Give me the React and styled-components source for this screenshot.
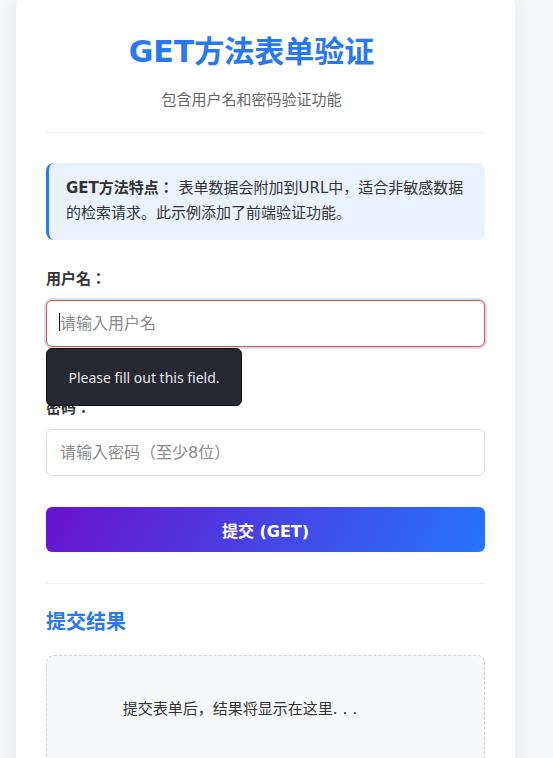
import React from 'react'
import styled, { createGlobalStyle } from 'styled-components'

const GlobalStyle = createGlobalStyle`
  html, body {
    margin: 0;
    padding: 0;
    background: #f5f6fa;
    font-family: "DejaVu Sans", "Noto Sans CJK JP", sans-serif;
    text-spacing-trim: space-all;
    overflow: hidden;
  }

  input {
    text-spacing-trim: space-all;
  }
`;

const SPage = styled.div`
  padding: 0 38px 0 16px;
`;

const SCard = styled.div`
  background: #fff;
  border-radius: 12px;
  margin-top: -6px;
  padding: 38px 30px 40px;
  box-shadow: 0 4px 20px rgba(0, 0, 0, 0.06);
`;

const SHeader = styled.header`
  text-align: center;
  padding: 0 28px 21px 0;
  border-bottom: 1px solid #eceef2;
`;

const STitle = styled.h1`
  margin: 0;
  font-size: 30px;
  font-weight: bold;
  color: #2878f0;
  line-height: 40px;
`;

const SSubtitle = styled.p`
  margin: 17px 0 0;
  font-size: 15px;
  color: #666;
  line-height: 22px;
`;

const SInfo = styled.div`
  margin-top: 30px;
  background: #e8f3ff;
  border-left: 3px solid #2878f0;
  border-radius: 8px;
  padding: 13px 14px 14px 17px;
  font-size: 15px;
  line-height: 25px;
  color: #333;

  strong {
    font-weight: bold;
  }
`;

const SForm = styled.form`
  display: flex;
  flex-direction: column;
`;

const SField = styled.div`
  position: relative;
  margin-top: ${p => p.$top || 0}px;
`;

const SLabel = styled.label`
  display: block;
  font-size: 15px;
  font-weight: bold;
  color: #333;
  line-height: 22px;
  margin-bottom: 10px;
`;

const SInput = styled.input`
  box-sizing: border-box;
  width: 100%;
  height: 47px;
  padding: 0 13px;
  font-family: "DejaVu Sans", "Noto Sans CJK JP", sans-serif;
  font-size: 16px;
  color: #333;
  background: #fff;
  border-radius: 6px;
  outline: none;
  border: 1px solid ${p => (p.$invalid ? '#e74c3c' : '#dcdcdc')};
  box-shadow: ${p => (p.$invalid ? '0 0 0 2px rgba(40, 120, 240, 0.22)' : 'none')};

  &::placeholder {
    color: #8a8a8a;
  }
`;

const SCaret = styled.span`
  position: absolute;
  left: 13px;
  top: 45px;
  width: 1px;
  height: 18px;
  background: #111;
  pointer-events: none;
`;

const STooltip = styled.div`
  position: absolute;
  left: 0;
  top: 80px;
  z-index: 5;
  box-sizing: border-box;
  width: 196px;
  height: 58px;
  background: #262833;
  border: 1px solid #111;
  border-radius: 6px;
  color: #e6e6e6;
  font-family: "Noto Sans", sans-serif;
  font-size: 14px;
  display: flex;
  align-items: center;
  justify-content: center;
`;

const SButton = styled.button`
  margin-top: 31px;
  height: 45px;
  border: none;
  border-radius: 6px;
  background: linear-gradient(120deg, #6a11cb 0%, #2575fc 100%);
  color: #fff;
  font-family: "DejaVu Sans", "Noto Sans CJK JP", sans-serif;
  font-size: 16px;
  font-weight: bold;
  cursor: pointer;
`;

const SResult = styled.section`
  margin-top: 31px;
  border-top: 1px solid #eceef2;
  padding-top: 24px;
`;

const SResultTitle = styled.h2`
  margin: 0;
  font-size: 20px;
  font-weight: 600;
  color: #2878f0;
  line-height: 28px;
`;

const SResultBox = styled.div`
  margin-top: 19px;
  height: 140px;
  background: #f7f8fa;
  border: 1px dashed #cfd2d6;
  border-radius: 8px;
  display: flex;
  justify-content: center;
  padding: 42px 46px 0 0;
  box-sizing: border-box;
  font-size: 15px;
  color: #333;
  line-height: 22px;
`;

const SDots = styled.span`
  letter-spacing: 5px;
`;

function App() {
  return (
    <>
      <GlobalStyle />
      <SPage>
        <SCard>
          <SHeader>
            <STitle>GET方法表单验证</STitle>
            <SSubtitle>包含用户名和密码验证功能</SSubtitle>
          </SHeader>
          <SInfo>
            <strong>GET方法特点：</strong> 表单数据会附加到URL中，适合非敏感数据的检索请求。此示例添加了前端验证功能。
          </SInfo>
          <SForm onSubmit={e => e.preventDefault()}>
            <SField $top={28}>
              <SLabel htmlFor="username">用户名：</SLabel>
              <SInput id="username" name="username" placeholder="请输入用户名" $invalid />
              <SCaret />
              <STooltip>Please fill out this field.</STooltip>
            </SField>
            <SField $top={50}>
              <SLabel htmlFor="password">密码：</SLabel>
              <SInput id="password" name="password" type="password" placeholder="请输入密码（至少8位）" />
            </SField>
            <SButton type="submit">提交 (GET)</SButton>
          </SForm>
          <SResult>
            <SResultTitle>提交结果</SResultTitle>
            <SResultBox>提交表单后，结果将显示在这里<SDots>...</SDots></SResultBox>
          </SResult>
        </SCard>
      </SPage>
    </>
  )
}

export default App
